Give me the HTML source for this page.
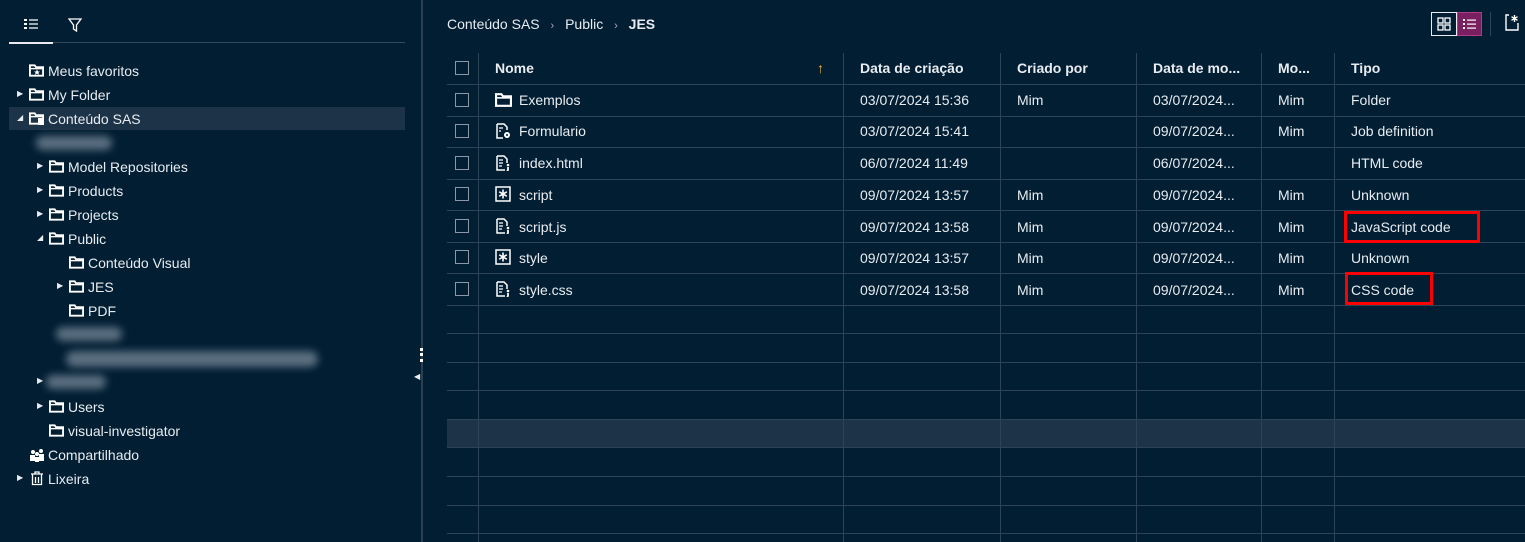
<!DOCTYPE html>
<html><head><meta charset="utf-8"><style>
*{margin:0;padding:0;box-sizing:border-box}
body{width:1525px;height:542px;background:#021e33;color:#e8ecf0;font-family:"Liberation Sans",sans-serif;font-size:14px;position:relative;overflow:hidden}
.a{position:absolute;white-space:nowrap}
.t{position:absolute;line-height:16px}
.hl{position:absolute;background:#1d3347}
.vl{position:absolute;width:1px;background:#2d4358}
.hr{position:absolute;height:1px;background:#2d4358}
.cb{position:absolute;width:14px;height:14px;border:1px solid #8a98a6}
.blur{position:absolute;background:#6a7d8e;filter:blur(4px);border-radius:8px;opacity:.85}
.tri{position:absolute;font-size:8px;color:#e8ecf0}
.red{position:absolute;border:3px solid #f00}
</style></head><body>
<svg width="0" height="0" style="position:absolute"><defs>
<symbol id="fold" viewBox="0 0 16 13"><path d="M1 1h5l1.5 2H15v9H1z" fill="none" stroke="#fff" stroke-width="2"/><path d="M1 4.5h14" stroke="#fff" stroke-width="1.5"/></symbol>
<symbol id="doc" viewBox="0 0 16 16"><path d="M2 1h7l3 3v4M2 1v14h8" fill="none" stroke="#fff" stroke-width="1.5"/><path d="M4 5h4M4 8h4M4 11h3" stroke="#fff" stroke-width="1.3"/><circle cx="13" cy="10" r="1.3" fill="#fff"/><path d="M13 12v3l-1 1" stroke="#fff" stroke-width="1.8" fill="none"/></symbol>
<symbol id="star" viewBox="0 0 16 16"><rect x="1" y="1" width="14" height="14" fill="none" stroke="#fff" stroke-width="1.5"/><path d="M8 3.5v9M4.2 5.8l7.6 4.4M11.8 5.8l-7.6 4.4" stroke="#fff" stroke-width="1.6"/></symbol>
</defs></svg>

<!-- sidebar -->
<div class="a" style="left:24px;top:17px"><svg width="14" height="12"><rect x="0" y="1" width="3" height="2" fill="#fff"/><rect x="0" y="5" width="3" height="2" fill="#fff"/><rect x="0" y="9" width="3" height="2" fill="#fff"/><path d="M5 2h9M5 6h9M5 10h9" stroke="#fff" stroke-width="1.3"/></svg></div>
<div class="a" style="left:68px;top:18px"><svg width="14" height="14"><path d="M1 1h12L8.5 7v6L5.5 11V7z" fill="none" stroke="#fff" stroke-width="1.3"/></svg></div>
<div class="hr" style="left:9px;top:42px;width:396px;background:#34495c"></div>
<div class="hr" style="left:9px;top:42px;width:44px;height:2px;background:#e8ecf0"></div>
<div class="vl" style="left:421px;top:0;height:542px;width:2px;background:#2a3f52"></div>
<div class="a" style="left:420px;top:348px;width:3px;height:14px;border-left:3px dotted #fff"></div>
<div class="tri" style="left:414px;top:372px">◀</div>

<div class="hl" style="left:9px;top:107px;width:396px;height:23px"></div>
<div class="a" style="left:29px;top:64px"><svg width="15" height="13"><use href="#fold"/><path d="M8 5.5l1 2h2l-1.6 1.3.6 2-2-1.2-2 1.2.6-2L5 7.5h2z" fill="#fff"/></svg></div><div class="t" style="left:48px;top:63px">Meus favoritos</div>
<div class="tri" style="left:17px;top:89px">▶</div><div class="a" style="left:29px;top:88px"><svg width="15" height="13"><use href="#fold"/></svg></div><div class="t" style="left:48px;top:87px">My Folder</div>
<div class="tri" style="left:17px;top:113px">◢</div><div class="a" style="left:29px;top:112px"><svg width="15" height="13"><use href="#fold"/><rect x="9" y="6" width="6" height="7" fill="#fff"/></svg></div><div class="t" style="left:48px;top:111px">Conteúdo SAS</div>
<div class="blur" style="left:36px;top:136px;width:76px;height:14px"></div>
<div class="tri" style="left:37px;top:161px">▶</div><div class="a" style="left:49px;top:160px"><svg width="15" height="13"><use href="#fold"/></svg></div><div class="t" style="left:68px;top:159px">Model Repositories</div>
<div class="tri" style="left:37px;top:185px">▶</div><div class="a" style="left:49px;top:184px"><svg width="15" height="13"><use href="#fold"/></svg></div><div class="t" style="left:68px;top:183px">Products</div>
<div class="tri" style="left:37px;top:209px">▶</div><div class="a" style="left:49px;top:208px"><svg width="15" height="13"><use href="#fold"/></svg></div><div class="t" style="left:68px;top:207px">Projects</div>
<div class="tri" style="left:37px;top:233px">◢</div><div class="a" style="left:49px;top:232px"><svg width="15" height="13"><use href="#fold"/></svg></div><div class="t" style="left:68px;top:231px">Public</div>
<div class="a" style="left:69px;top:256px"><svg width="15" height="13"><use href="#fold"/></svg></div><div class="t" style="left:88px;top:255px">Conteúdo Visual</div>
<div class="tri" style="left:57px;top:281px">▶</div><div class="a" style="left:69px;top:280px"><svg width="15" height="13"><use href="#fold"/></svg></div><div class="t" style="left:88px;top:279px">JES</div>
<div class="a" style="left:69px;top:304px"><svg width="15" height="13"><use href="#fold"/></svg></div><div class="t" style="left:88px;top:303px">PDF</div>
<div class="blur" style="left:56px;top:327px;width:66px;height:14px"></div>
<div class="blur" style="left:66px;top:351px;width:252px;height:16px"></div>
<div class="tri" style="left:37px;top:376px">▶</div><div class="blur" style="left:46px;top:375px;width:60px;height:14px"></div>
<div class="tri" style="left:37px;top:401px">▶</div><div class="a" style="left:49px;top:400px"><svg width="15" height="13"><use href="#fold"/></svg></div><div class="t" style="left:68px;top:399px">Users</div>
<div class="a" style="left:49px;top:424px"><svg width="15" height="13"><use href="#fold"/></svg></div><div class="t" style="left:68px;top:423px">visual-investigator</div>
<div class="a" style="left:29px;top:448px"><svg width="16" height="14"><circle cx="4" cy="4" r="2" fill="#fff"/><circle cx="12" cy="3" r="2" fill="#fff"/><circle cx="8" cy="6" r="2" fill="#fff"/><rect x="1" y="7" width="5" height="6" fill="#fff"/><rect x="10" y="6" width="5" height="7" fill="#fff"/><rect x="6" y="9" width="4" height="5" fill="#fff"/></svg></div><div class="t" style="left:48px;top:447px">Compartilhado</div>
<div class="tri" style="left:17px;top:473px">▶</div><div class="a" style="left:30px;top:471px"><svg width="14" height="15"><path d="M1 3h12M5 3V1h4v2M2.5 3.5v10h9v-10M5.5 6v6M8.5 6v6" fill="none" stroke="#fff" stroke-width="1.3"/></svg></div><div class="t" style="left:48px;top:471px">Lixeira</div>

<!-- main -->
<div class="t" style="left:447px;top:16px">Conteúdo SAS <span style="color:#aab;font-size:11px;margin:0 7px">›</span> Public <span style="color:#aab;font-size:11px;margin:0 7px">›</span> <b>JES</b></div>
<div class="a" style="left:1431px;top:12px;width:26px;height:24px;border:1px solid #e8ecf0"><svg width="24" height="22"><g fill="none" stroke="#fff" stroke-width="1.3"><rect x="6" y="5" width="5" height="5"/><rect x="13" y="5" width="5" height="5"/><rect x="6" y="12" width="5" height="5"/><rect x="13" y="12" width="5" height="5"/></g></svg></div>
<div class="a" style="left:1457px;top:12px;width:25px;height:24px;background:#7a1f5f;border:1px solid #b03a8a"><svg width="23" height="22"><g fill="#fff"><rect x="5" y="6" width="2" height="2"/><rect x="5" y="10" width="2" height="2"/><rect x="5" y="14" width="2" height="2"/><rect x="9" y="6.5" width="9" height="1.2"/><rect x="9" y="10.5" width="9" height="1.2"/><rect x="9" y="14.5" width="9" height="1.2"/></g></svg></div>
<div class="vl" style="left:1490px;top:12px;height:24px"></div>
<div class="a" style="left:1505px;top:14px"><svg width="14" height="17"><path d="M4 1H1v15h12V9" fill="none" stroke="#fff" stroke-width="1.4"/><path d="M9.5 1v7M6.5 2.7l6 3.6M12.5 2.7l-6 3.6" stroke="#fff" stroke-width="1.4"/></svg></div>

<div class="hl" style="left:447px;top:419px;width:1078px;height:28px"></div>
<div class="hr" style="left:447px;top:84px;width:1078px"></div>
<div class="hr" style="left:447px;top:116px;width:1078px"></div>
<div class="hr" style="left:447px;top:147px;width:1078px"></div>
<div class="hr" style="left:447px;top:179px;width:1078px"></div>
<div class="hr" style="left:447px;top:210px;width:1078px"></div>
<div class="hr" style="left:447px;top:242px;width:1078px"></div>
<div class="hr" style="left:447px;top:273px;width:1078px"></div>
<div class="hr" style="left:447px;top:305px;width:1078px"></div>
<div class="hr" style="left:447px;top:333px;width:1078px"></div>
<div class="hr" style="left:447px;top:362px;width:1078px"></div>
<div class="hr" style="left:447px;top:390px;width:1078px"></div>
<div class="hr" style="left:447px;top:419px;width:1078px"></div>
<div class="hr" style="left:447px;top:447px;width:1078px"></div>
<div class="hr" style="left:447px;top:476px;width:1078px"></div>
<div class="hr" style="left:447px;top:505px;width:1078px"></div>
<div class="hr" style="left:447px;top:533px;width:1078px"></div>
<div class="vl" style="left:478px;top:53px;height:489px"></div>
<div class="vl" style="left:843px;top:53px;height:489px"></div>
<div class="vl" style="left:1000px;top:53px;height:489px"></div>
<div class="vl" style="left:1136px;top:53px;height:489px"></div>
<div class="vl" style="left:1261px;top:53px;height:489px"></div>
<div class="vl" style="left:1334px;top:53px;height:489px"></div>

<div class="cb" style="left:455px;top:61px"></div>
<div class="t" style="left:495px;top:60px;font-weight:bold">Nome</div>
<div class="t" style="left:817px;top:60px;color:#f5b43c;font-weight:bold">↑</div>
<div class="t" style="left:860px;top:60px;font-weight:bold">Data de criação</div>
<div class="t" style="left:1017px;top:60px;font-weight:bold">Criado por</div>
<div class="t" style="left:1153px;top:60px;font-weight:bold">Data de mo...</div>
<div class="t" style="left:1278px;top:60px;font-weight:bold">Mo...</div>
<div class="t" style="left:1351px;top:60px;font-weight:bold">Tipo</div>

<div class="cb" style="left:455px;top:93px"></div><div class="a" style="left:495px;top:93px"><svg width="17" height="14"><use href="#fold"/></svg></div><div class="t" style="left:519px;top:92px">Exemplos</div><div class="t" style="left:860px;top:92px">03/07/2024 15:36</div><div class="t" style="left:1017px;top:92px">Mim</div><div class="t" style="left:1153px;top:92px">03/07/2024...</div><div class="t" style="left:1278px;top:92px">Mim</div><div class="t" style="left:1351px;top:92px">Folder</div>

<div class="cb" style="left:455px;top:124px"></div><div class="a" style="left:495px;top:123px"><svg width="16" height="16"><path d="M2 1h7l3 3v3M2 1v14h6" fill="none" stroke="#fff" stroke-width="1.5"/><path d="M4 5h4M4 8h2" stroke="#fff" stroke-width="1.3"/><circle cx="12" cy="12" r="3" fill="#fff"/><circle cx="12" cy="12" r="1" fill="#021e33"/></svg></div><div class="t" style="left:519px;top:123px">Formulario</div><div class="t" style="left:860px;top:123px">03/07/2024 15:41</div><div class="t" style="left:1153px;top:123px">09/07/2024...</div><div class="t" style="left:1278px;top:123px">Mim</div><div class="t" style="left:1351px;top:123px">Job definition</div>

<div class="cb" style="left:455px;top:156px"></div><div class="a" style="left:495px;top:155px"><svg width="16" height="16"><use href="#doc"/></svg></div><div class="t" style="left:519px;top:155px">index.html</div><div class="t" style="left:860px;top:155px">06/07/2024 11:49</div><div class="t" style="left:1153px;top:155px">06/07/2024...</div><div class="t" style="left:1351px;top:155px">HTML code</div>

<div class="cb" style="left:455px;top:187px"></div><div class="a" style="left:495px;top:186px"><svg width="16" height="16"><use href="#star"/></svg></div><div class="t" style="left:519px;top:187px">script</div><div class="t" style="left:860px;top:187px">09/07/2024 13:57</div><div class="t" style="left:1017px;top:187px">Mim</div><div class="t" style="left:1153px;top:187px">09/07/2024...</div><div class="t" style="left:1278px;top:187px">Mim</div><div class="t" style="left:1351px;top:187px">Unknown</div>

<div class="cb" style="left:455px;top:219px"></div><div class="a" style="left:495px;top:218px"><svg width="16" height="16"><use href="#doc"/></svg></div><div class="t" style="left:519px;top:219px">script.js</div><div class="t" style="left:860px;top:219px">09/07/2024 13:58</div><div class="t" style="left:1017px;top:219px">Mim</div><div class="t" style="left:1153px;top:219px">09/07/2024...</div><div class="t" style="left:1278px;top:219px">Mim</div><div class="t" style="left:1351px;top:219px">JavaScript code</div>
<div class="red" style="left:1344px;top:211px;width:136px;height:32px"></div>

<div class="cb" style="left:455px;top:250px"></div><div class="a" style="left:495px;top:249px"><svg width="16" height="16"><use href="#star"/></svg></div><div class="t" style="left:519px;top:250px">style</div><div class="t" style="left:860px;top:250px">09/07/2024 13:57</div><div class="t" style="left:1017px;top:250px">Mim</div><div class="t" style="left:1153px;top:250px">09/07/2024...</div><div class="t" style="left:1278px;top:250px">Mim</div><div class="t" style="left:1351px;top:250px">Unknown</div>

<div class="cb" style="left:455px;top:282px"></div><div class="a" style="left:495px;top:281px"><svg width="16" height="16"><use href="#doc"/></svg></div><div class="t" style="left:519px;top:282px">style.css</div><div class="t" style="left:860px;top:282px">09/07/2024 13:58</div><div class="t" style="left:1017px;top:282px">Mim</div><div class="t" style="left:1153px;top:282px">09/07/2024...</div><div class="t" style="left:1278px;top:282px">Mim</div><div class="t" style="left:1351px;top:282px">CSS code</div>
<div class="red" style="left:1345px;top:272px;width:88px;height:33px"></div>
</body></html>
